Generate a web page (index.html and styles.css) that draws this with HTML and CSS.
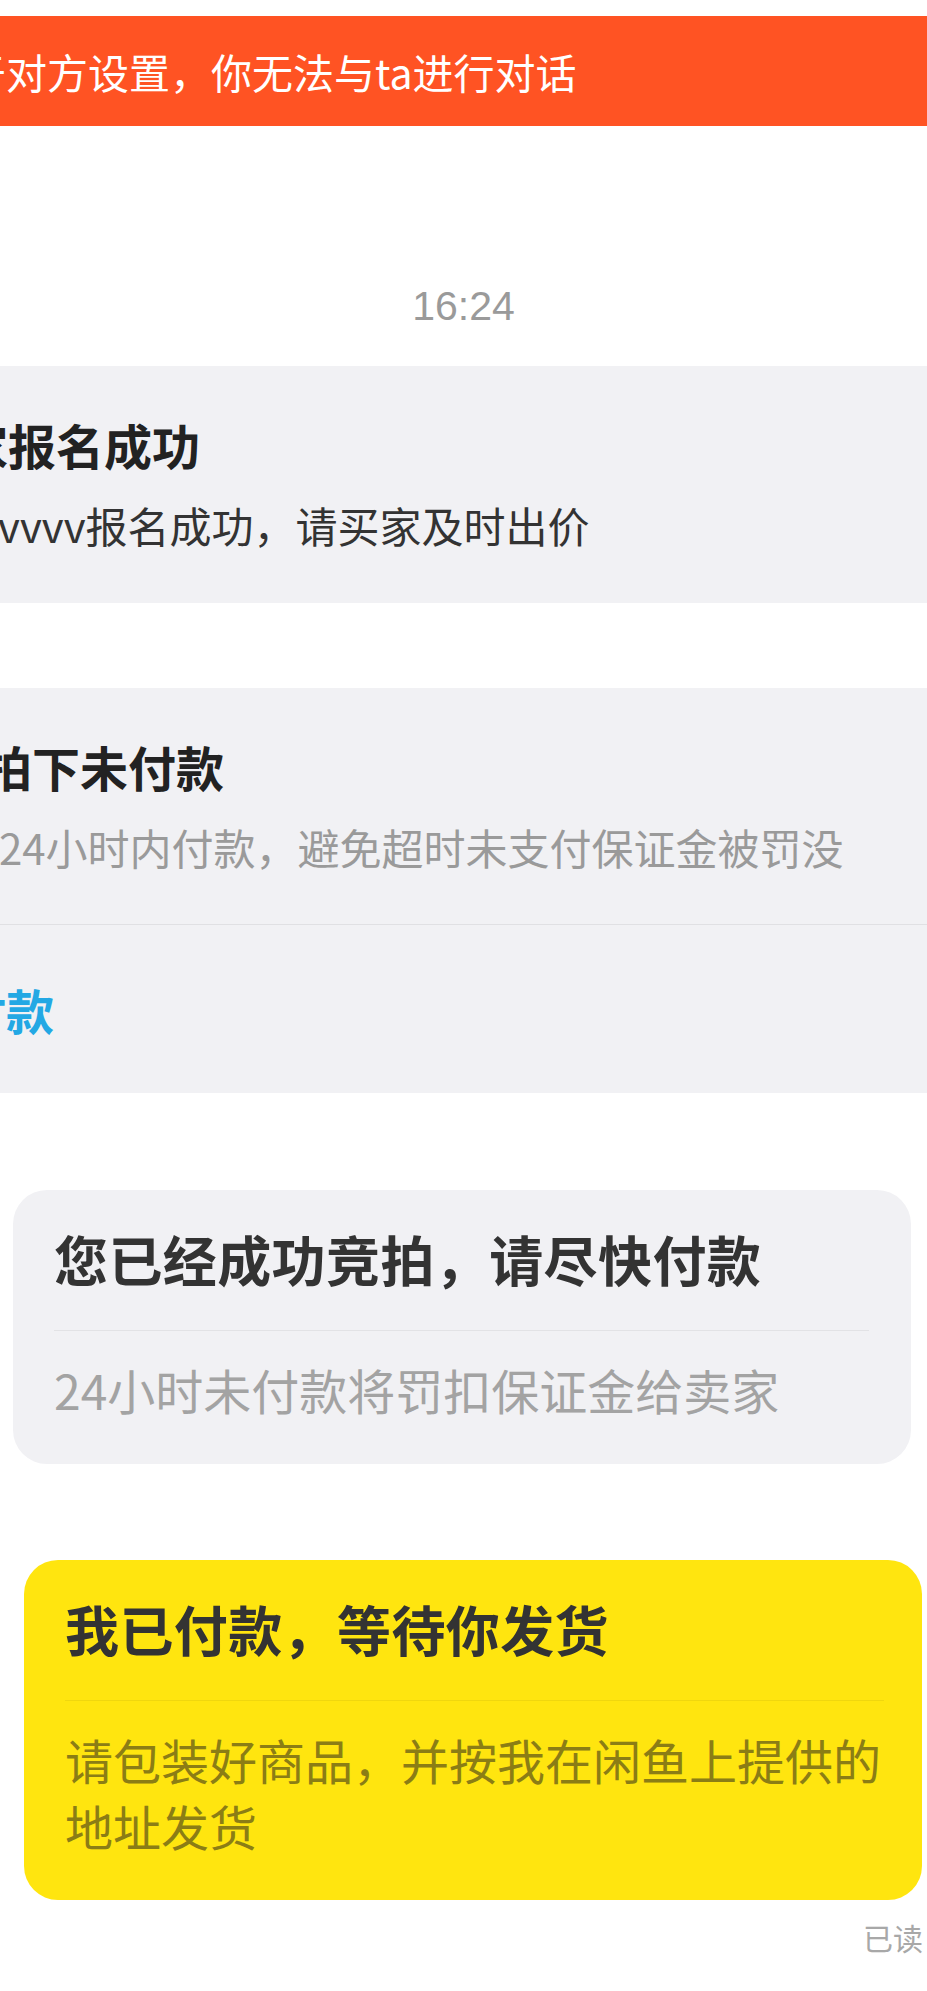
FILE: index.html
```html
<!DOCTYPE html>
<html lang="zh-CN">
<head>
<meta charset="utf-8">
<title>闲鱼聊天</title>
<link rel="stylesheet" href="styles.css">
</head>
<body>
<div class="page">
  <div class="banner"><p class="banner-text">由于对方设置，你无法与ta进行对话</p></div>

  <div class="time">16:24</div>

  <section class="card">
    <div class="card-body">
      <p class="card-title card1-title">买家报名成功</p>
      <p class="card-sub card1-sub">用户vvvv报名成功，请买家及时出价</p>
    </div>
  </section>

  <section class="card card-2">
    <div class="card-body">
      <p class="card-title card2-title">已拍下未付款</p>
      <p class="card-sub muted card2-sub">请在24小时内付款，避免超时未支付保证金被罚没</p>
    </div>
    <div class="card-action"><span class="action-text">去付款</span></div>
  </section>

  <div class="bubble bubble-in">
    <p class="bubble-title">您已经成功竞拍，请尽快付款</p>
    <div class="bubble-line"></div>
    <p class="bubble-sub">24小时未付款将罚扣保证金给卖家</p>
  </div>

  <div class="bubble bubble-out">
    <p class="bubble-title">我已付款，等待你发货</p>
    <div class="bubble-line"></div>
    <p class="bubble-sub">请包装好商品，并按我在闲鱼上提供的地址发货</p>
  </div>

  <div class="read">已读</div>
</div>
</body>
</html>
```

FILE: styles.css
```css
html, body {
  margin: 0;
  padding: 0;
  background: #ffffff;
}

body {
  font-family: "Noto Sans CJK SC", "Noto Sans", sans-serif;
  overflow-x: hidden;
}

p {
  margin: 0;
}

.page {
  padding-top: 16px;
  width: 927px;
  min-height: 1991px;
  box-sizing: border-box;
}

/* orange notice bar */
.banner {
  height: 110px;
  background: #ff5323;
  display: flex;
  align-items: center;
}

.banner-text {
  color: #ffffff;
  font-size: 41px;
  line-height: 56px;
  white-space: nowrap;
  text-indent: -76px;
}

/* time stamp */
.time {
  margin-top: 156px;
  font-family: "Liberation Sans", Arial, sans-serif;
  font-size: 41px;
  line-height: 48px;
  color: #9a9a9a;
  text-align: center;
}

/* system cards (cropped on the left) */
.card {
  margin-top: 36px;
  background: #f1f1f4;
}

.card-2 {
  margin-top: 85px;
}

.card-body {
  padding: 46px 0 50px 0;
  display: flex;
  flex-direction: column;
  gap: 21px;
}

.card-2 .card-body {
  padding-bottom: 49px;
  border-bottom: 1px solid #e0e0e3;
}

.card-title {
  font-size: 48px;
  line-height: 64px;
  font-weight: 700;
  color: #222222;
  white-space: nowrap;
}

.card-sub {
  font-size: 42px;
  line-height: 56px;
  color: #333333;
  white-space: nowrap;
}

.card-sub.muted {
  color: #9a9a9a;
}

.card1-title { text-indent: -88px; }
.card1-sub { text-indent: -86px; }
.card2-title { text-indent: -64px; }
.card2-sub { text-indent: -85px; }

.card-action {
  height: 168px;
  display: flex;
  align-items: center;
}

.action-text {
  display: block;
  font-size: 48px;
  line-height: 64px;
  font-weight: 700;
  color: #23a8e4;
  white-space: nowrap;
  text-indent: -90px;
}

/* chat bubbles */
.bubble {
  width: 898px;
  box-sizing: border-box;
  border-radius: 34px;
  padding: 34px 42px 42px 41px;
}

.bubble-in {
  margin: 97px 0 0 13px;
  background: #f1f1f4;
}

.bubble-out {
  margin: 96px 0 0 24px;
  padding-right: 38px;
  background: #ffe50f;
}

.bubble-title {
  font-size: 54px;
  line-height: 70px;
  font-weight: 700;
  color: #333333;
  white-space: nowrap;
  letter-spacing: 0.4px;
}

.bubble-line {
  height: 1px;
  margin: 36px 0 25px 0;
  background: rgba(0, 0, 0, 0.06);
}

.bubble-sub {
  font-size: 48px;
  line-height: 66px;
  color: #a3a3a3;
}

.bubble-out .bubble-sub {
  color: #8b7d15;
}

.read {
  margin-top: 17px;
  padding-right: 4px;
  text-align: right;
  font-size: 30px;
  line-height: 40px;
  color: #a8a8a8;
}
```
